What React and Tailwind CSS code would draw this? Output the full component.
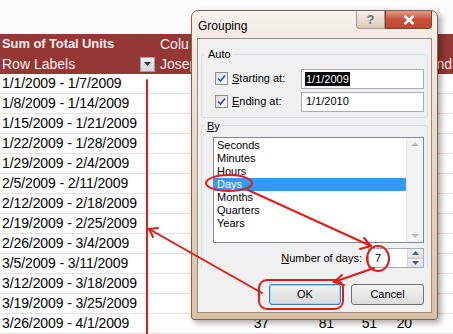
import React from 'react';

const rows = [
  '1/1/2009 - 1/7/2009',
  '1/8/2009 - 1/14/2009',
  '1/15/2009 - 1/21/2009',
  '1/22/2009 - 1/28/2009',
  '1/29/2009 - 2/4/2009',
  '2/5/2009 - 2/11/2009',
  '2/12/2009 - 2/18/2009',
  '2/19/2009 - 2/25/2009',
  '2/26/2009 - 3/4/2009',
  '3/5/2009 - 3/11/2009',
  '3/12/2009 - 3/18/2009',
  '3/19/2009 - 3/25/2009',
  '3/26/2009 - 4/1/2009',
];

const units = ['Seconds', 'Minutes', 'Hours', 'Days', 'Months', 'Quarters', 'Years'];

const Check = () => (
  <span className="w-[13px] h-[13px] border border-[#8f8f8f] bg-gradient-to-br from-[#dcdcdc] to-white flex items-center justify-center">
    <svg width="9" height="9" viewBox="0 0 9 9">
      <path d="M1 4.5 L3.5 7 L8 1.5" fill="none" stroke="#2f4f9f" strokeWidth="1.6" />
    </svg>
  </span>
);

const Sheet = () => (
  <div className="flex flex-col whitespace-nowrap">
    <div className="h-[34px] bg-[#fbfbfb]" />
    <div className="bg-[#953735] text-[#f7ecec] text-[14px] leading-[20px]">
      <div className="flex h-[20px]">
        <div className="w-[158px] pl-[2px] font-bold text-[13px] tracking-[-0.1px]">Sum of Total Units</div>
        <div className="w-[33px] pl-[2px] overflow-hidden">Colu</div>
      </div>
      <div className="flex h-[20px] items-center">
        <div className="w-[158px] pl-[2px] flex items-center justify-between pr-[3px]">
          <span>Row Labels</span>
          <span className="w-[15px] h-[15px] bg-gradient-to-b from-[#eef1f5] to-[#cdd3db] border border-[#9aa3ad] flex items-center justify-center">
            <svg width="7" height="4" viewBox="0 0 7 4"><path d="M0 0 H7 L3.5 4 Z" fill="#333" /></svg>
          </span>
        </div>
        <div className="w-[33px] pl-[2px] overflow-hidden">Josep</div>
        <div className="flex-1" />
        <div className="pr-[1px]">nd</div>
      </div>
    </div>
    {rows.map((r, i) => (
      <div key={r} className="flex h-[20px] border-b border-[#f0dcdc] text-[14px] leading-[19px] tracking-[-0.1px] text-black">
        <div className="w-[158px] pl-[2px]">{r}</div>
        {i === rows.length - 1 && (
          <div className="flex-1 flex text-right">
            <span className="w-[111px]">37</span>
            <span className="w-[65px]">81</span>
            <span className="w-[43px]">51</span>
            <span className="w-[35px]">20</span>
          </div>
        )}
      </div>
    ))}
  </div>
);

const Dialog = () => (
  <div className="absolute left-[191px] top-[10px] w-[247px] h-[310px] rounded-t-[7px] rounded-b-[3px] border border-[#7a6554] bg-gradient-to-b from-[#f6f1ec] via-[#e6d6c5] to-[#d9c1a6] shadow-[3px_3px_6px_rgba(0,0,0,0.35)] flex flex-col font-['Liberation_Sans',Arial,sans-serif] text-[11px] text-black">
    <div className="h-[27px] flex items-start justify-between pl-[6px] pr-[5px]">
      <span className="mt-[6px] text-[12px]">Grouping</span>
      <div className="flex">
        <span className="w-[29px] h-[18px] rounded-bl-[4px] border border-[#a99685] border-t-0 bg-gradient-to-b from-[#f5efea] to-[#dccbbb] flex items-center justify-center text-[13px] text-[#6d6d6d] font-bold">?</span>
        <span className="w-[47px] h-[18px] rounded-br-[4px] border border-[#8d3b2b] border-t-0 bg-gradient-to-b from-[#e59a86] via-[#c8503a] to-[#bd4a30] flex items-center justify-center">
          <svg width="12" height="10" viewBox="0 0 12 10"><path d="M1.5 1 L10.5 9 M10.5 1 L1.5 9" stroke="white" strokeWidth="2.4" /></svg>
        </span>
      </div>
    </div>
    <div className="mx-[5px] mb-[6px] flex-1 border border-[#9c8c7c] bg-[#f0f0f0] px-[3px] pt-[7px] flex flex-col">
      <fieldset className="border border-[#d5dfe5] rounded-[3px] pl-[13px] pr-[3px] pb-[5px]">
        <legend className="px-[3px] -ml-[10px]">Auto</legend>
        <div className="flex flex-col gap-[3px] mt-[6px]">
          <div className="flex items-center h-[20px]">
            <Check />
            <span className="ml-[4px] w-[69px]"><u>S</u>tarting at:</span>
            <span className="flex-1 h-[20px] border border-[#abadb3] bg-white flex items-center px-[3px]">
              <span className="bg-black text-white leading-[14px] px-[1px]">1/1/2009</span>
            </span>
          </div>
          <div className="flex items-center h-[20px]">
            <Check />
            <span className="ml-[4px] w-[69px]"><u>E</u>nding at:</span>
            <span className="flex-1 h-[20px] border border-[#abadb3] bg-white flex items-center px-[4px]">1/1/2010</span>
          </div>
        </div>
      </fieldset>
      <fieldset className="border border-[#d5dfe5] border-b-0 rounded-t-[3px] pl-[11px] pr-[3px]">
        <legend className="px-[3px] -ml-[9px]"><u>B</u>y</legend>
        <div className="mt-[3px] h-[106px] border border-[#828790] bg-white flex">
          <div className="flex-1 flex flex-col pt-[1px] leading-[13px]">
            {units.map((u) => (
              <span key={u} className={u === 'Days' ? 'bg-[#3399ff] text-white pl-[3px]' : 'pl-[3px]'}>{u}</span>
            ))}
          </div>
          <div className="w-[17px] bg-[#f4f4f4] border-l border-[#e6e6e6] flex flex-col justify-between items-center py-[4px]">
            <svg width="8" height="4" viewBox="0 0 8 4"><path d="M0 4 L4 0 L8 4 Z" fill="#bcbcbc" /></svg>
            <svg width="8" height="4" viewBox="0 0 8 4"><path d="M0 0 L4 4 L8 0 Z" fill="#bcbcbc" /></svg>
          </div>
        </div>
        <div className="mt-[5px] flex items-center justify-end">
          <span className="mr-[6px]"><u>N</u>umber of days:</span>
          <span className="w-[56px] h-[20px] border border-[#abadb3] bg-white flex items-center justify-between pl-[6px]">
            <span>7</span>
            <span className="w-[16px] h-[18px] flex flex-col border-l border-[#d6d6d6]">
              <span className="flex-1 flex items-center justify-center bg-gradient-to-b from-[#f6f6f6] to-[#dedede] border-b border-[#c4c4c4]">
                <svg width="7" height="4" viewBox="0 0 7 4"><path d="M0 4 L3.5 0 L7 4 Z" fill="#4a5f7a" /></svg>
              </span>
              <span className="flex-1 flex items-center justify-center bg-gradient-to-b from-[#f6f6f6] to-[#dedede]">
                <svg width="7" height="4" viewBox="0 0 7 4"><path d="M0 0 L3.5 4 L7 0 Z" fill="#4a5f7a" /></svg>
              </span>
            </span>
          </span>
        </div>
      </fieldset>
      <div className="mt-[16px] flex justify-end gap-[10px] pr-[4px]">
        <span className="w-[72px] h-[21px] rounded-[3px] border border-[#3c7fb1] bg-gradient-to-b from-[#f4f4f4] to-[#d8d8d8] flex items-center justify-center shadow-[inset_0_0_0_1px_#9fd8f5]">OK</span>
        <span className="w-[73px] h-[21px] rounded-[3px] border border-[#707070] bg-gradient-to-b from-[#f2f2f2] to-[#dcdcdc] flex items-center justify-center">Cancel</span>
      </div>
    </div>
  </div>
);

const Marks = () => (
  <svg className="absolute inset-0 pointer-events-none" width="453" height="334" viewBox="0 0 453 334">
    <g fill="none" stroke="#e11b1b" strokeWidth="2" strokeLinecap="round" strokeLinejoin="round">
      <line x1="147" y1="80" x2="147" y2="334" />
      <ellipse cx="229" cy="183" rx="23" ry="8" />
      <line x1="248" y1="190" x2="371" y2="246" />
      <polyline points="360,249 371,246 364,238" />
      <ellipse cx="378" cy="258.5" rx="11" ry="12.5" />
      <line x1="374" y1="268" x2="334" y2="282" />
      <polyline points="342,275 334,282 344,285" />
      <rect x="259" y="280" width="84" height="29" rx="8" />
      <line x1="262" y1="293" x2="149" y2="229" />
      <polyline points="158,228 149,229 153,237" />
    </g>
  </svg>
);

export default function App() {
  return (
    <div className="relative w-[453px] h-[334px] overflow-hidden bg-white font-['Liberation_Sans',Arial,sans-serif]">
      <Sheet />
      <Dialog />
      <Marks />
    </div>
  );
}
